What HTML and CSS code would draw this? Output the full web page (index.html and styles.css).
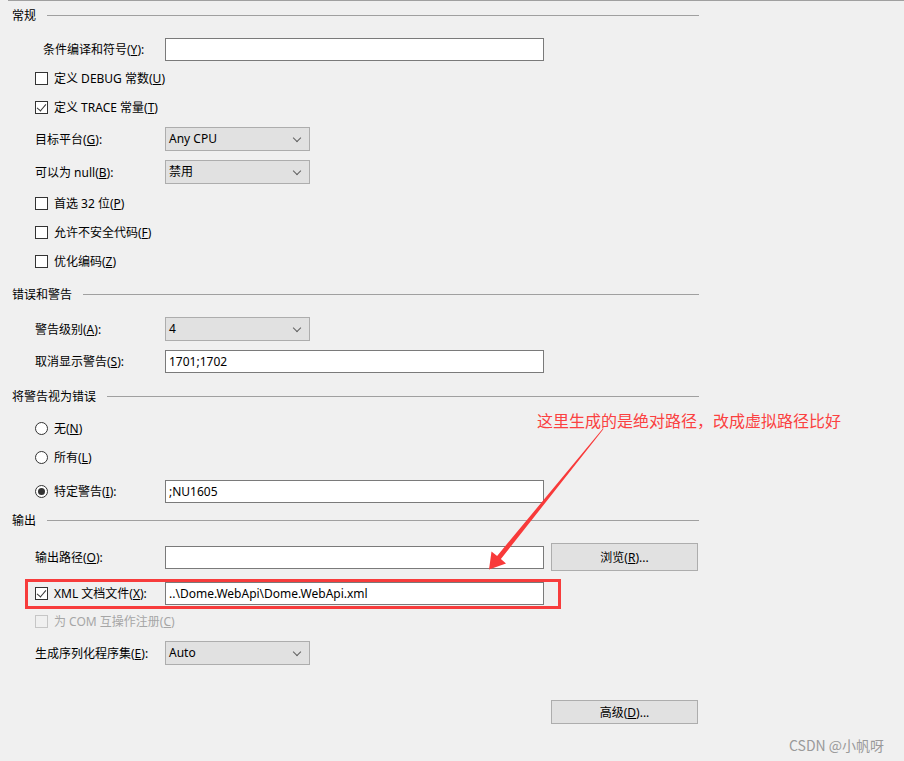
FILE: index.html
```html
<!DOCTYPE html>
<html lang="zh-CN">

<head>
    <meta charset="UTF-8">
    <title>生成</title>
    <link rel="stylesheet" href="styles.css">
</head>

<body>
    <div class="page">
        <div class="topline"></div>

        <!-- 常规 -->
        <div class="group-head"><span>常规</span><i></i></div>

        <div class="row mt12">
            <label class="lbl lbl-indent">条件编译和符号(<u>Y</u>):</label>
            <span class="textbox"></span>
        </div>
        <div class="row mt5">
            <span class="check"></span><span>定义 DEBUG 常数(<u>U</u>)</span>
        </div>
        <div class="row mt5">
            <span class="check checked"></span><span>定义 TRACE 常量(<u>T</u>)</span>
        </div>
        <div class="row mt8">
            <label class="lbl">目标平台(<u>G</u>):</label>
            <span class="combo">Any CPU</span>
        </div>
        <div class="row mt9">
            <label class="lbl">可以为 null(<u>B</u>):</label>
            <span class="combo">禁用</span>
        </div>
        <div class="row mt7">
            <span class="check"></span><span>首选 32 位(<u>P</u>)</span>
        </div>
        <div class="row mt5">
            <span class="check"></span><span>允许不安全代码(<u>F</u>)</span>
        </div>
        <div class="row mt5">
            <span class="check"></span><span>优化编码(<u>Z</u>)</span>
        </div>

        <!-- 错误和警告 -->
        <div class="group-head mt11"><span>错误和警告</span><i></i></div>

        <div class="row mt13">
            <label class="lbl">警告级别(<u>A</u>):</label>
            <span class="combo">4</span>
        </div>
        <div class="row mt8">
            <label class="lbl">取消显示警告(<u>S</u>):</label>
            <span class="textbox">1701;1702</span>
        </div>

        <!-- 将警告视为错误 -->
        <div class="group-head mt13"><span>将警告视为错误</span><i></i></div>

        <div class="row mt10">
            <span class="radio"></span><span>无(<u>N</u>)</span>
        </div>
        <div class="row mt5">
            <span class="radio"></span><span>所有(<u>L</u>)</span>
        </div>
        <div class="row mt10">
            <span class="radio checked"></span><span class="lbl-radio">特定警告(<u>I</u>):</span>
            <span class="textbox">;NU1605</span>
        </div>

        <!-- 输出 -->
        <div class="group-head mt7"><span>输出</span><i></i></div>

        <div class="row mt15">
            <label class="lbl">输出路径(<u>O</u>):</label>
            <span class="textbox"></span>
            <button class="btn btn-tall">浏览(<u>R</u>)...</button>
        </div>
        <div class="highlight mt10">
            <div class="row row-in">
                <span class="check checked"></span><span class="lbl-check">XML 文档文件(<u>X</u>):</span>
                <span class="textbox">..\Dome.WebApi\Dome.WebApi.xml</span>
            </div>
        </div>
        <div class="row disabled">
            <span class="check"></span><span>为 COM 互操作注册(<u>C</u>)</span>
        </div>
        <div class="row mt8">
            <label class="lbl">生成序列化程序集(<u>E</u>):</label>
            <span class="combo">Auto</span>
        </div>

        <div class="row row-end mt35">
            <button class="btn">高级(<u>D</u>)...</button>
        </div>
    </div>

    <!-- annotation drawn over the dialog -->
    <div class="note">这里生成的是绝对路径，改成虚拟路径比好</div>
    <svg class="arrow" width="904" height="761" viewBox="0 0 904 761">
        <polygon points="603.3,429.3 500.9,559.1 506,563.5 489,569.5 491.5,551.5 497.1,555.9 602.7,428.7" fill="#f83a3a"/>
    </svg>

    <div class="mark">CSDN @小帆呀</div>
</body>

</html>
```

FILE: styles.css
```css
body {
    margin: 0;
    padding: 0;
    background-color: #f0f0f0;
    font-family: "Noto Sans", "Noto Sans CJK SC", sans-serif;
    font-size: 12px;
    color: #000;
    width: 904px;
    height: 761px;
    overflow: hidden;
    position: relative;
}

u {
    text-decoration: underline;
    text-underline-offset: 1px;
}

.page {
    display: flex;
    flex-direction: column;
}

.topline {
    height: 1px;
    margin-left: 8px;
    background-color: #a0a0a0;
}

/* group headers */
.group-head {
    display: flex;
    align-items: center;
    height: 20px;
    margin-left: 12px;
    width: 687px;
}

.group-head:first-of-type,
.topline + .group-head {
    margin-top: 4px;
}

.group-head span {
    margin-right: 11px;
}

.group-head i {
    flex: 1;
    height: 1px;
    background-color: #a0a0a0;
}

/* rows */
.row {
    display: flex;
    align-items: center;
    height: 24px;
    padding-left: 35px;
}

.lbl {
    width: 130px;
}

.lbl-indent {
    padding-left: 8px;
    width: 122px;
}

.lbl-radio {
    width: 111px;
}

.lbl-check {
    width: 111px;
}

.textbox {
    box-sizing: border-box;
    width: 379px;
    height: 23px;
    border: 1px solid #7a7a7a;
    background-color: #fff;
    padding-left: 3px;
    line-height: 21px;
}

.combo {
    box-sizing: border-box;
    position: relative;
    width: 145px;
    height: 24px;
    border: 1px solid #adadad;
    background-color: #e1e1e1;
    padding-left: 3px;
    line-height: 22px;
}

.combo::after {
    content: "";
    position: absolute;
    right: 9px;
    top: 7px;
    width: 5px;
    height: 5px;
    border-right: 1px solid #606060;
    border-bottom: 1px solid #606060;
    transform: rotate(45deg);
}

.check {
    box-sizing: border-box;
    position: relative;
    width: 13px;
    height: 13px;
    border: 1px solid #333;
    background-color: #fff;
    margin-right: 6px;
}

.check.checked::after {
    content: "";
    position: absolute;
    left: 3px;
    top: 0px;
    width: 4px;
    height: 8px;
    border-right: 1px solid #333;
    border-bottom: 1px solid #333;
    transform: rotate(40deg);
}

.radio {
    box-sizing: border-box;
    position: relative;
    width: 13px;
    height: 13px;
    border: 1px solid #333;
    border-radius: 50%;
    background-color: #fff;
    margin-right: 6px;
}

.radio.checked::after {
    content: "";
    position: absolute;
    left: 2px;
    top: 2px;
    width: 7px;
    height: 7px;
    border-radius: 50%;
    background-color: #333;
}

.disabled {
    color: #a6a6a6;
}

.disabled .check {
    border-color: #c6c6c6;
    background-color: #f0f0f0;
}

.btn {
    box-sizing: border-box;
    width: 147px;
    height: 24px;
    border: 1px solid #adadad;
    background-color: #e1e1e1;
    font-family: inherit;
    font-size: 12px;
    color: #000;
    padding: 0;
}

.btn-tall {
    height: 28px;
    margin-left: 7px;
}

.row-end {
    padding-left: 551px;
}

/* red highlight box around the xml row */
.highlight {
    box-sizing: border-box;
    margin-left: 25px;
    width: 536px;
    height: 30px;
    border: 3px solid #f73c3c;
    padding-bottom: 2px;
}

.row-in {
    height: 22px;
    padding-left: 7px;
}

/* spacing helpers */
.mt5 { margin-top: 5px; }
.mt7 { margin-top: 7px; }
.mt8 { margin-top: 8px; }
.mt9 { margin-top: 9px; }
.mt10 { margin-top: 10px; }
.mt11 { margin-top: 11px; }
.mt12 { margin-top: 12px; }
.mt13 { margin-top: 13px; }
.mt15 { margin-top: 15px; }
.mt35 { margin-top: 35px; }

/* overlays */
.note {
    position: absolute;
    left: 537px;
    top: 409px;
    font-family: "Noto Sans CJK SC", sans-serif;
    font-size: 16px;
    line-height: 22px;
    color: #fb4141;
}

.arrow {
    position: absolute;
    left: 0;
    top: 0;
}

.mark {
    position: absolute;
    left: 789px;
    top: 735px;
    font-family: "Noto Sans CJK SC", sans-serif;
    font-size: 14px;
    line-height: 20px;
    color: #9a9a9a;
}
```
